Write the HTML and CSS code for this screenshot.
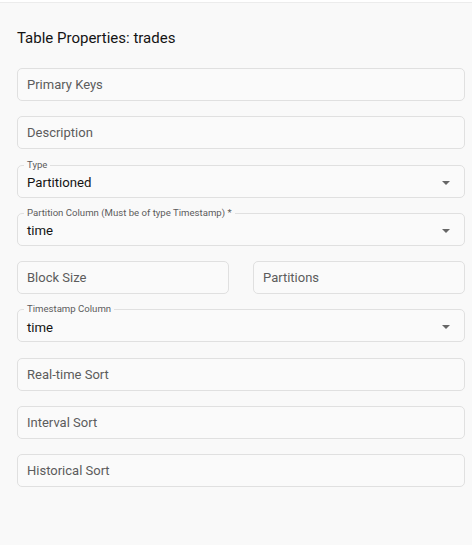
FILE: index.html
```html
<!DOCTYPE html>
<html>
<head>
<meta charset="utf-8">
<link rel="stylesheet" href="styles.css">
</head>
<body>
<div class="panel">
  <h1 class="title">Table Properties: trades</h1>
  <div class="form">
    <div class="field"><span class="placeholder">Primary Keys</span></div>
    <div class="field"><span class="placeholder">Description</span></div>
    <div class="field select">
      <span class="label">Type</span>
      <span class="value">Partitioned</span>
      <span class="arrow"></span>
    </div>
    <div class="field select">
      <span class="label">Partition Column (Must be of type Timestamp) *</span>
      <span class="value">time</span>
      <span class="arrow"></span>
    </div>
    <div class="row">
      <div class="field"><span class="placeholder">Block Size</span></div>
      <div class="field"><span class="placeholder">Partitions</span></div>
    </div>
    <div class="field select">
      <span class="label">Timestamp Column</span>
      <span class="value">time</span>
      <span class="arrow"></span>
    </div>
    <div class="field"><span class="placeholder">Real-time Sort</span></div>
    <div class="field"><span class="placeholder">Interval Sort</span></div>
    <div class="field"><span class="placeholder">Historical Sort</span></div>
  </div>
</div>
</body>
</html>
```
FILE: styles.css
```css
html, body {
  margin: 0;
  padding: 0;
  background: #ffffff;
}
body {
  font-family: Roboto, "Liberation Sans", sans-serif;
  padding-top: 2px;
}
.panel {
  width: 472px;
  height: 543px;
  box-sizing: border-box;
  background: #f9f9f9;
  border-top: 1px solid #ececec;
  padding: 0 7px 0 17px;
}
.title {
  margin: 0;
  padding-top: 25px;
  font-size: 15px;
  line-height: 20px;
  font-weight: 400;
  color: #141414;
}
.form {
  margin-top: 20px;
  display: flex;
  flex-direction: column;
  gap: 15.25px;
}
.row {
  display: flex;
  gap: 24px;
}
.row .field {
  flex: 1;
}
.field {
  position: relative;
  height: 33px;
  box-sizing: border-box;
  border: 1px solid #e0e0e0;
  border-radius: 5px;
  background: #fafafa;
  display: flex;
  align-items: center;
  padding: 0 9px;
  font-size: 13px;
}
.placeholder {
  color: #5c5c5c;
}
.value {
  color: #141414;
  font-size: 13.2px;
  padding-top: 3px;
}
.label {
  position: absolute;
  left: 6px;
  top: -7px;
  padding: 0 3px;
  font-size: 9.6px;
  line-height: 12px;
  color: #5c5c5c;
  background: linear-gradient(#f9f9f9 50%, #fafafa 50%);
}
.arrow {
  position: absolute;
  right: 14px;
  top: 15px;
  width: 0;
  height: 0;
  border-left: 4px solid transparent;
  border-right: 4px solid transparent;
  border-top: 4px solid #666666;
}
```
